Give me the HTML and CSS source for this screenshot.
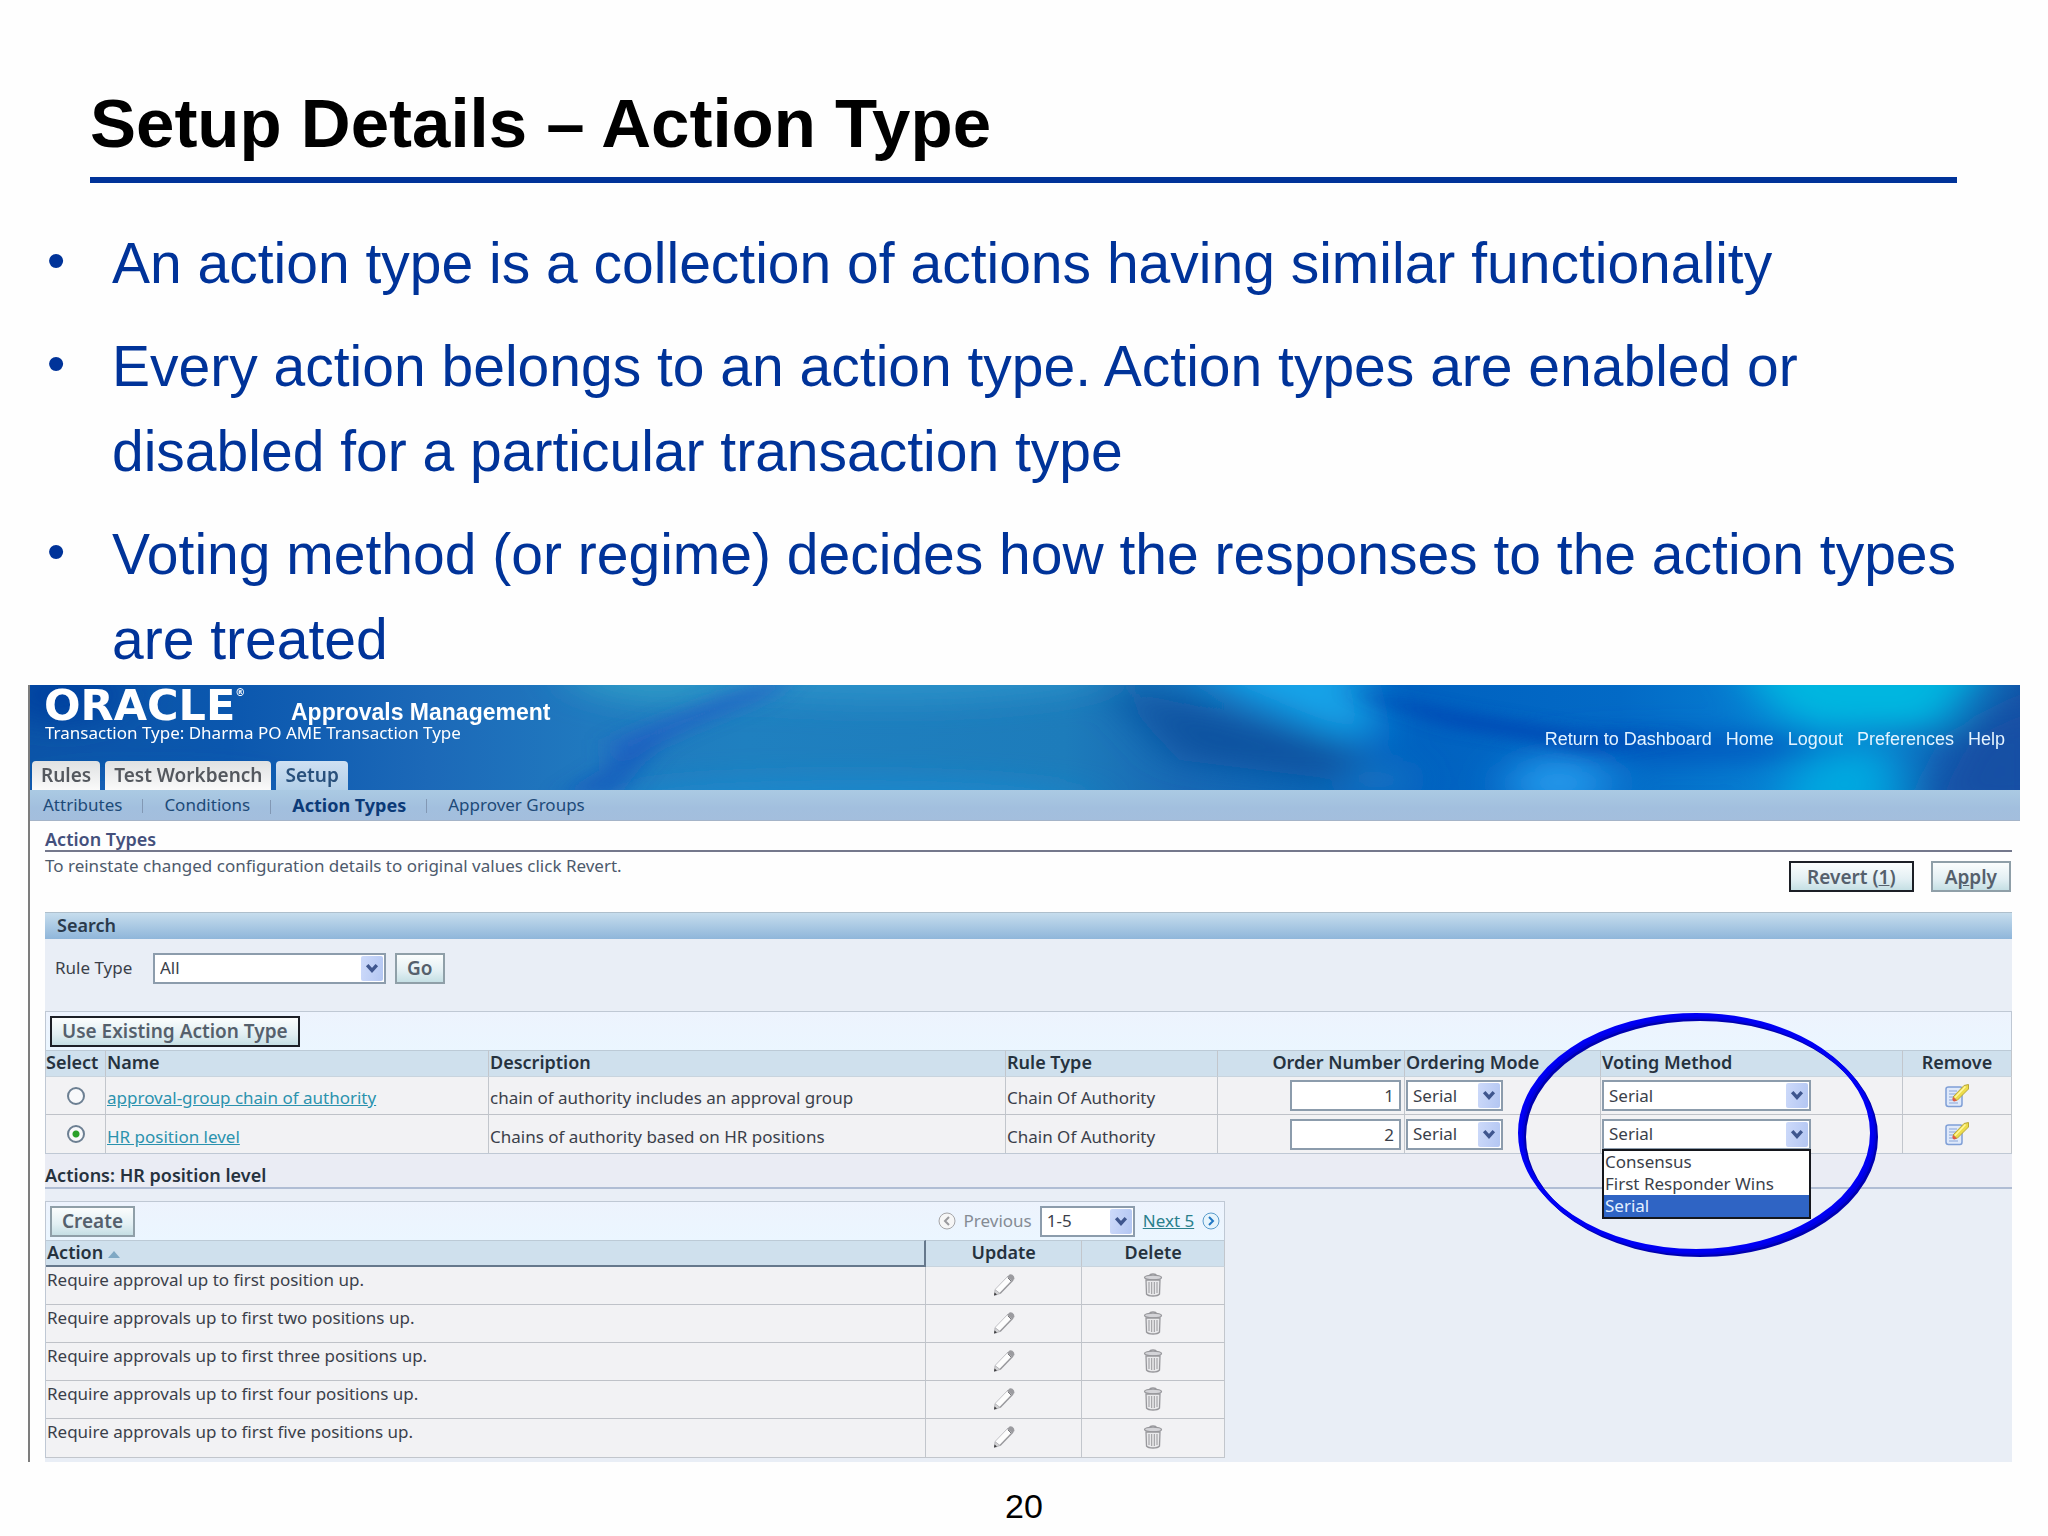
FILE: index.html
```html
<!DOCTYPE html>
<html lang="en">
<head>
<meta charset="utf-8">
<title>Setup Details – Action Type</title>
<link rel="stylesheet" href="styles.css">
</head>
<body>
<svg class="defs" aria-hidden="true">
  <defs>
    <symbol id="i-pencil" viewBox="0 0 24 24">
      <path d="M3 16.500 16 3.500 20 7.500 8 20.500Z" fill="#fdfdfd"/>
      <path d="M3.500 16 16 3" stroke="#c2c2c6" fill="none"/>
      <path d="M8 20.500 21 7" stroke="#98989c" stroke-width="1.500" fill="none"/>
      <path d="M15 4 17.500 1.500Q20 .5 22 3.500L22.500 6 20 8Z" fill="#9b9b9f"/>
      <path d="M16 5 19 8" stroke="#77777b"/>
      <path d="M2.500 22.500 3 16.500 8 20.500Z" fill="#d4d4d6" stroke="#a4a4a8" stroke-width=".7"/>
      <path d="M2 22.500 2.500 19.500 5 21.500Z" fill="#3c3c3e"/>
    </symbol>
    <symbol id="i-trash" viewBox="0 0 20 24">
      <path d="M7 2.500Q7 1 10 1T13 2.500" fill="none" stroke="#98989c" stroke-width="1.500"/>
      <ellipse cx="10" cy="4.500" rx="8.500" ry="2.300" fill="#d4d4d8" stroke="#98989c" stroke-width="1.300"/>
      <path d="M3 7H17L16.500 21Q15 23 10 23T3.500 21Z" fill="#e9e9eb" stroke="#98989c" stroke-width="1.300"/>
      <path d="M6 9V20M8.700 9V21M11.300 9V21M14 9V20" stroke="#98989c"/>
    </symbol>
    <symbol id="i-note" viewBox="0 0 24 24">
      <path d="M3.500 3H15.500Q17 3 17 5V20Q17 22.500 15 22.500H3.500Q1 22.500 1 20V5Q1 3 3.500 3Z" fill="#dfe9fa" stroke="#7f9fd6" stroke-width="1.500"/>
      <path d="M4 7H12M4 10H11M4 13H9M4 16H8M4 19H13" stroke="#8aa6d8" stroke-width="1.200"/>
      <path d="M8 13 19 1.500 23.500 .5V5L12 16.500Z" fill="#eddc4a" stroke="#b8a63a"/>
      <path d="M10 13.500 20.500 2.500" stroke="#fff7a0" stroke-width="1.500"/>
      <path d="M8 13 12 16.500 9.500 17.500Q7 17 7.500 14.500Z" fill="#dd5c46"/>
    </symbol>
    <symbol id="i-chevron" viewBox="0 0 22 26">
      <path d="M6 9.500 11 15 16 9.500" fill="none" stroke="#3f568e" stroke-width="3.500"/>
    </symbol>
  </defs>
</svg>

<main class="slide">
  <h1 class="slide-title">Setup Details – Action Type</h1>
  <ul class="points">
    <li>An action type is a collection of actions having similar functionality</li>
    <li>Every action belongs to an action type. Action types are enabled or disabled for a particular transaction type</li>
    <li>Voting method (or regime) decides how the responses to the action types are treated</li>
  </ul>

  <section class="app">
    <header class="banner">
      <svg class="banner-art" viewBox="0 0 1992 105" preserveAspectRatio="none" aria-hidden="true">
        <defs>
          <linearGradient id="sky">
            <stop offset="0" stop-color="#0b55a8"/><stop offset=".1" stop-color="#0b57ae"/>
            <stop offset=".2" stop-color="#1c69b8"/><stop offset=".28" stop-color="#2079bf"/>
            <stop offset=".36" stop-color="#1f80c0"/><stop offset=".52" stop-color="#1d7cbb"/>
            <stop offset=".58" stop-color="#1768b4"/><stop offset=".65" stop-color="#0b66b6"/>
            <stop offset=".68" stop-color="#0060bf"/><stop offset=".8" stop-color="#036ac6"/>
            <stop offset=".9" stop-color="#0786d6"/><stop offset="1" stop-color="#1554a8"/>
          </linearGradient>
          <filter id="soft" filterUnits="userSpaceOnUse" x="-100" y="-100" width="2200" height="305"><feGaussianBlur stdDeviation="24 14"/></filter>
          <filter id="softer" filterUnits="userSpaceOnUse" x="-100" y="-100" width="2200" height="305"><feGaussianBlur stdDeviation="12 7"/></filter>
        </defs>
        <rect width="1992" height="105" fill="url(#sky)"/>
        <g filter="url(#soft)">
          <ellipse cx="30" cy="10" rx="60" ry="30" fill="#0643a0"/>
          <ellipse cx="120" cy="110" rx="130" ry="16" fill="#1a66bb"/>
          <ellipse cx="640" cy="-10" rx="100" ry="28" fill="#2f9ac6"/>
          <ellipse cx="860" cy="-10" rx="220" ry="28" fill="#2a90c8"/>
          <ellipse cx="820" cy="115" rx="240" ry="20" fill="#1b88cc"/>
          <path d="M1080 0 1180 25 1330 70 1310 95 1150 75Z" fill="#0a52a0"/>
          <path d="M1130-30H1330L1350 60 1310 50 1220 15Z" fill="#13a3e8"/>
          <ellipse cx="1350" cy="95" rx="25" ry="20" fill="#1f78c4"/>
          <ellipse cx="1530" cy="98" rx="50" ry="28" fill="#2397ea"/>
          <path d="M1710-30H1970L1910 44 1780 42 1740 20Z" fill="#00b6e0"/>
          <path d="M1780 70 1860 60 1870 130H1750Z" fill="#00a8e0"/>
          <ellipse cx="1660" cy="62" rx="150" ry="12" fill="#0052bb"/>
          <path d="M2030 0 1930 50 1890 125H2030Z" fill="#1450a4"/>
        </g>
        <g filter="url(#softer)">
          <path d="M580 55 630 35 700 8 770-12 740 12 660 45 580 85Z" fill="#2360c4" opacity=".65"/>
          <path d="M530 110 610 60 640 45 590 110Z" fill="#1752bd" opacity=".6"/>
          <path d="M1320 5 1440 28 1560 48 1660 52 1560 66 1420 42Z" fill="#0048b4" opacity=".8"/>
        </g>
      </svg>
      <div class="brand">
        <div class="brand-row"><span class="logo">ORACLE<sup>®</sup></span><h2 class="product">Approvals Management</h2></div>
        <p class="context">Transaction Type: Dharma PO AME Transaction Type</p>
        <nav class="tabs">
          <a href="#">Rules</a><a href="#">Test Workbench</a><a href="#" class="current">Setup</a>
        </nav>
      </div>
      <nav class="global">
        <a href="#">Return to Dashboard</a><a href="#">Home</a><a href="#">Logout</a><a href="#">Preferences</a><a href="#">Help</a>
      </nav>
    </header>
    <nav class="subtabs">
      <a href="#">Attributes</a><a href="#">Conditions</a><a href="#" class="current">Action Types</a><a href="#">Approver Groups</a>
    </nav>

    <div class="content">
      <h3 class="page-title">Action Types</h3>
      <div class="intro">
        <p>To reinstate changed configuration details to original values click Revert.</p>
        <div class="page-buttons">
          <button type="button" class="strong">Revert (<u>1</u>)</button>
          <button type="button">A<u>p</u>ply</button>
        </div>
      </div>

      <h4 class="search-title">Search</h4>
      <div class="panel">
        <form class="search">
          <label for="rule-type">Rule Type</label>
          <span class="select wide"><select id="rule-type"><option>All</option></select><svg><use href="#i-chevron"/></svg></span>
          <button type="button">Go</button>
        </form>

        <div class="box">
          <div class="toolbar"><button type="button" class="strong">Use Existing Action Type</button></div>
          <table class="grid types">
            <colgroup><col class="c-select"><col class="c-name"><col><col class="c-rule"><col class="c-order"><col class="c-mode"><col class="c-vote"><col class="c-remove"></colgroup>
            <thead>
              <tr><th>Select</th><th>Name</th><th>Description</th><th>Rule Type</th><th class="num">Order Number</th><th>Ordering Mode</th><th>Voting Method</th><th class="mid">Remove</th></tr>
            </thead>
            <tbody>
              <tr>
                <td class="mid"><input type="radio" name="type" aria-label="Select approval-group chain of authority"></td>
                <td class="text"><a href="#">approval-group chain of authority</a></td>
                <td class="text">chain of authority includes an approval group</td>
                <td class="text">Chain Of Authority</td>
                <td class="num"><input type="text" value="1" aria-label="Order Number"></td>
                <td><span class="select mode"><select aria-label="Ordering Mode"><option>Serial</option></select><svg><use href="#i-chevron"/></svg></span></td>
                <td><span class="select vote"><select aria-label="Voting Method"><option>Serial</option></select><svg><use href="#i-chevron"/></svg></span></td>
                <td class="mid"><svg class="icon"><use href="#i-note"/></svg></td>
              </tr>
              <tr>
                <td class="mid"><input type="radio" name="type" checked aria-label="Select HR position level"></td>
                <td class="text"><a href="#">HR position level</a></td>
                <td class="text">Chains of authority based on HR positions</td>
                <td class="text">Chain Of Authority</td>
                <td class="num"><input type="text" value="2" aria-label="Order Number"></td>
                <td><span class="select mode"><select aria-label="Ordering Mode"><option>Serial</option></select><svg><use href="#i-chevron"/></svg></span></td>
                <td class="open">
                  <span class="select vote"><select aria-label="Voting Method"><option>Serial</option></select><svg><use href="#i-chevron"/></svg></span>
                  <ul class="menu"><li>Consensus</li><li>First Responder Wins</li><li class="active">Serial</li></ul>
                  <svg class="ring" viewBox="0 0 362 246" aria-hidden="true">
                    <g fill="none" stroke-width="4">
                      <ellipse cx="183" cy="125" rx="176" ry="118" stroke="#0000b0"/>
                      <ellipse cx="181" cy="123" rx="176" ry="118" stroke="#0000e0"/>
                      <ellipse cx="179" cy="121" rx="176" ry="118" stroke="#0000f4"/>
                    </g>
                  </svg>
                </td>
                <td class="mid"><svg class="icon"><use href="#i-note"/></svg></td>
              </tr>
            </tbody>
          </table>
        </div>

        <h4 class="sub-title">Actions: HR position level</h4>
        <div class="box actions">
          <div class="toolbar">
            <button type="button">Create</button>
            <div class="pager">
              <svg class="arrow" viewBox="0 0 18 18"><circle cx="9" cy="9" r="8" fill="#f6f6f6" stroke="#a5a5a8"/><path d="M11 5 7 9 11 13" fill="none" stroke="#9a9a9e" stroke-width="2"/></svg>
              <span class="off">Previous</span>
              <span class="select range"><select aria-label="Rows"><option>1-5</option></select><svg><use href="#i-chevron"/></svg></span>
              <a href="#">Next 5</a>
              <svg class="arrow" viewBox="0 0 18 18"><circle cx="9" cy="9" r="8" fill="#e6f4fc" stroke="#5a9bcb"/><path d="M7 5 11 9 7 13" fill="none" stroke="#2277c4" stroke-width="2"/></svg>
            </div>
          </div>
          <table class="grid list">
            <colgroup><col><col class="c-update"><col class="c-delete"></colgroup>
            <thead><tr><th class="sorted">Action <svg class="sort" viewBox="0 0 14 8"><path d="M0 8 7 0 14 8Z" fill="#7fa8c4"/></svg></th><th class="mid">Update</th><th class="mid">Delete</th></tr></thead>
            <tbody>
              <tr><td>Require approval up to first position up.</td><td class="mid"><svg class="icon"><use href="#i-pencil"/></svg></td><td class="mid"><svg class="icon"><use href="#i-trash"/></svg></td></tr>
              <tr><td>Require approvals up to first two positions up.</td><td class="mid"><svg class="icon"><use href="#i-pencil"/></svg></td><td class="mid"><svg class="icon"><use href="#i-trash"/></svg></td></tr>
              <tr><td>Require approvals up to first three positions up.</td><td class="mid"><svg class="icon"><use href="#i-pencil"/></svg></td><td class="mid"><svg class="icon"><use href="#i-trash"/></svg></td></tr>
              <tr><td>Require approvals up to first four positions up.</td><td class="mid"><svg class="icon"><use href="#i-pencil"/></svg></td><td class="mid"><svg class="icon"><use href="#i-trash"/></svg></td></tr>
              <tr><td>Require approvals up to first five positions up.</td><td class="mid"><svg class="icon"><use href="#i-pencil"/></svg></td><td class="mid"><svg class="icon"><use href="#i-trash"/></svg></td></tr>
            </tbody>
          </table>
        </div>
      </div>
    </div>
  </section>
  <footer class="page-number">20</footer>
</main>
</body>
</html>
```
FILE: styles.css
```css
* { box-sizing: border-box; }
body { margin: 0; background: #fefefe; font-family: "Liberation Sans", Arial, sans-serif; }
h1, h2, h3, h4, p, ul { margin: 0; padding: 0; font-weight: normal; }
.defs { display: none; }

/* slide */
.slide { padding-top: 84px; }
.slide-title {
  margin: 0 91px 0 90px;
  padding-bottom: 13px;
  border-bottom: 6px solid #003399;
  font-size: 69px;
  line-height: 80px;
  font-weight: bold;
  color: #000;
}
.points {
  margin: 38px 80px 0 47px;
  list-style: none;
  color: #003399;
  font-size: 57px;
  line-height: 85px;
}
.points li { display: flex; margin-bottom: 18px; }
.points li:last-child { margin-bottom: 0; }
.points li::before { content: "•"; flex: 0 0 65px; font-size: 52px; line-height: 78px; }
.page-number { padding-top: 24px; text-align: center; font-size: 34px; line-height: 40px; color: #000; }

/* application frame */
.app {
  margin: 3px 28px 0;
  border-left: 2px solid #7d7d7d;
  font-family: "Noto Sans", "Open Sans", sans-serif;
  font-size: 17px;
  line-height: 22px;
  color: #3b3f4a;
}
.banner { position: relative; display: flex; justify-content: space-between; height: 105px; color: #fff; }
.banner-art { position: absolute; inset: 0; width: 100%; height: 100%; }
.brand { position: relative; display: flex; flex-direction: column; }
.brand-row { display: flex; align-items: baseline; gap: 28px; padding-left: 14px; height: 37px; }
.logo { min-width: 219px; font-family: "DejaVu Sans", sans-serif; font-weight: bold; font-size: 43px; line-height: 40px; }
.logo sup { font-size: 10px; line-height: 10px; vertical-align: 24px; }
.product { font-family: "Liberation Sans", Arial, sans-serif; font-size: 23px; font-weight: bold; }
.context { padding-left: 15px; line-height: 22px; }
.tabs { display: flex; gap: 5px; margin-top: auto; padding-left: 2px; }
.tabs a {
  padding: 0 9px;
  height: 29px;
  line-height: 29px;
  border-radius: 4px 4px 0 0;
  background: linear-gradient(#dfe1e2, #fafafa);
  color: #54585e;
  font-size: 19px;
  font-weight: 600;
  text-decoration: none;
}
.tabs a.current { background: linear-gradient(#cfe0f2, #b2cfe8); color: #28507c; }
.global { position: relative; display: flex; gap: 14px; padding: 43px 15px 0 0; font-family: "Liberation Sans", Arial, sans-serif; font-size: 18px; }
.global a { color: #e4f4ff; text-decoration: none; }
.subtabs {
  display: flex;
  align-items: center;
  height: 31px;
  padding-left: 13px;
  background: linear-gradient(#abcae3, #a2bfde 60%, #a3bedd);
  border-bottom: 1px solid #a5b4c8;
}
.subtabs a { color: #1d4a78; text-decoration: none; }
.subtabs a + a::before { content: ""; display: inline-block; width: 1px; height: 14px; margin: 0 21px 0 20px; background: #8298b4; vertical-align: -2px; }
.subtabs a.current { font-size: 18px; font-weight: bold; color: #0b3a78; }

/* page content */
.content { padding: 8px 8px 0 15px; }
.page-title { border-bottom: 2px solid #74788c; font-size: 18px; line-height: 21px; font-weight: 600; color: #44507c; }
.intro { display: flex; justify-content: space-between; height: 60px; padding-top: 3px; color: #4d5a6c; }
.page-buttons { display: flex; align-items: flex-start; gap: 17px; padding: 6px 1px 0 0; }
button {
  height: 31px;
  padding: 0 10px;
  border: 2px solid #8f9fa8;
  background: linear-gradient(#fbfdfd, #e2eff3 60%, #c5dfe4);
  font: 600 19px/24px "Noto Sans", "Open Sans", sans-serif;
  color: #55606c;
}
button.strong { border-color: #1c1f26; }
.page-buttons button { padding: 0 12px; }
.page-buttons button.strong { padding: 0 16px; }
.search-title {
  height: 27px;
  padding-left: 12px;
  border-top: 1px solid #aebfcc;
  background: linear-gradient(#c6dded, #8fb6da);
  font-size: 18px;
  line-height: 24px;
  font-weight: 600;
  color: #2a3a4c;
}
.panel { background: #e9eef6; padding-bottom: 4px; }
.search { display: flex; align-items: center; gap: 9px; height: 72px; padding: 0 10px 14px; }
.search label { width: 89px; }

/* form controls */
.select { display: inline-grid; width: 97px; height: 31px; background: #fff; border: 2px solid #8c9cac; vertical-align: middle; }
.select select, .select svg { grid-area: 1 / 1; }
.select select {
  appearance: none;
  width: 100%;
  border: 0;
  padding: 0 5px;
  background: transparent;
  font: inherit;
  color: inherit;
}
.select svg { justify-self: end; width: 22px; height: 25px; margin: 1px; background: linear-gradient(100deg, #cddafa, #b3c6f2); border-radius: 2px; pointer-events: none; }
.select.wide { width: 233px; }
.select.vote { width: 209px; }
.select.range { width: 95px; }
input[type="text"] { width: 111px; height: 31px; padding: 0 5px; border: 2px solid #8c9cac; background: #fff; text-align: right; font: inherit; color: inherit; vertical-align: middle; }
input[type="radio"] { appearance: none; display: block; width: 18px; height: 18px; margin: 0 auto; border: 2px solid #6c7f92; border-radius: 50%; background: #f8f9fb; }
input[type="radio"]:checked { background: radial-gradient(circle, #2aa02a 0 3px, #f8f9fb 4px); }

/* data tables */
.box { border: 1px solid #bfc8d4; border-right: 0; }
.toolbar { display: flex; align-items: center; justify-content: space-between; height: 38px; padding: 0 4px; border-right: 1px solid #bfc8d4; background: linear-gradient(#edf3fd, #ebf6ff); }
.grid { width: 100%; table-layout: fixed; border-collapse: separate; border-spacing: 0; }
.grid th, .grid td { padding: 0 1px; border-right: 1px solid #c2c6cc; text-align: left; white-space: nowrap; }
.grid th { height: 27px; border-top: 1px solid #bccad6; border-bottom: 1px solid #c8d4de; background: #cfe0ed; font-size: 18px; font-weight: 600; color: #26323e; vertical-align: top; }
.grid td { height: 38px; border-bottom: 1px solid #bfc2c8; background: #f2f2f4; vertical-align: middle; }
.grid tbody tr:last-child td { border-bottom: 0; }
.grid .num { padding-right: 3px; text-align: right; }
.grid .mid { text-align: center; }
.grid a, .pager a { color: #2b92ae; }
.types td.text { padding-top: 5px; }
.types th:first-child { padding: 0; }
.list td { vertical-align: top; padding-top: 2px; }
.list td.mid { padding-top: 6px; }
.list th.sorted { border-bottom: 2px solid #66788c; border-right: 2px solid #66788c; }
.sort { width: 12px; height: 7px; vertical-align: 1px; }
.icon { display: block; width: 24px; height: 24px; margin: 0 auto; }
.c-select { width: 60px; }
.c-name { width: 383px; }
.c-rule { width: 212px; }
.c-order { width: 187px; }
.c-mode { width: 196px; }
.c-vote { width: 302px; }
.c-remove { width: 109px; }
.c-update { width: 156px; }
.c-delete { width: 143px; }

/* open drop-down and its highlight ring */
.grid td.open { position: relative; overflow: visible; }
.menu {
  position: absolute;
  z-index: 1;
  top: 34px;
  left: 1px;
  width: 209px;
  border: 2px solid #14161c;
  background: #fff;
  list-style: none;
}
.menu li { padding: 0 1px; line-height: 22px; }
.menu li.active { background: #2f64c4; color: #e4f0ff; }
.ring { position: absolute; z-index: 2; top: -103px; left: -84px; width: 362px; height: 246px; pointer-events: none; }

/* actions list */
.sub-title { height: 35px; padding-top: 9px; border-bottom: 2px solid #b0bdd4; background: #eaecf4; font-size: 18px; line-height: 24px; font-weight: 600; color: #26323e; }
.actions { width: 60%; margin-top: 12px; border-bottom-color: #c2c6cc; }
.pager { display: flex; align-items: center; gap: 8px; }
.pager .arrow { width: 18px; height: 18px; }
.pager .off { color: #858b94; }
.pager a { color: #2a7f8c; }
```
